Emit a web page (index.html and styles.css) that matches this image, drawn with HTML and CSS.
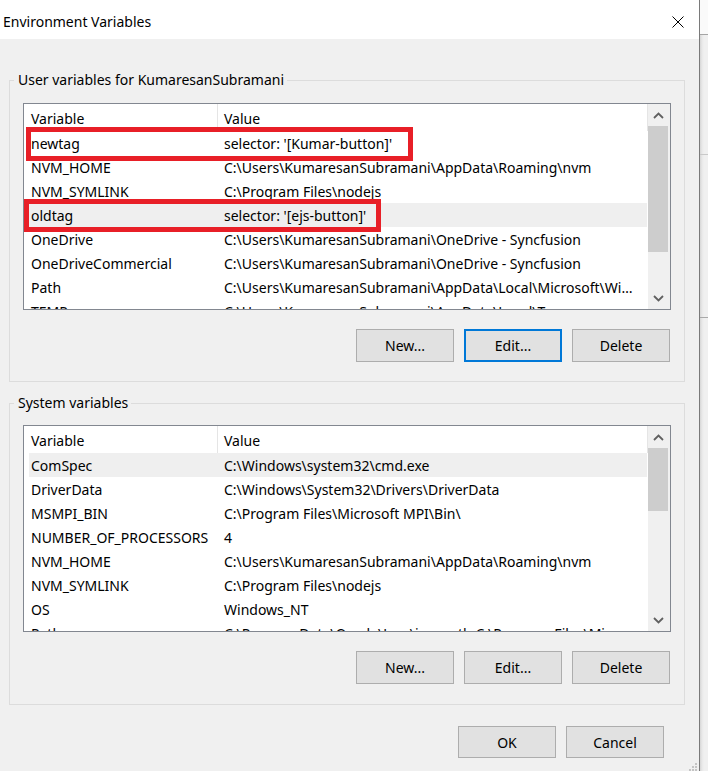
FILE: index.html
```html
<!DOCTYPE html>
<html lang="en">
<head>
<meta charset="utf-8">
<title>Environment Variables</title>
<link rel="stylesheet" href="styles.css">
</head>
<body>
<div class="screen">
  <div class="dialog">
    <div class="titlebar">
      <span class="title">Environment Variables</span>
      <svg class="close" width="12" height="12" viewBox="0 0 12 12"><path d="M0.5 0.5 L11.5 11.5 M11.5 0.5 L0.5 11.5" stroke="#000" stroke-width="1" fill="none"/></svg>
    </div>
    <div class="content">
      <fieldset class="group group-user">
        <legend>User variables for KumaresanSubramani</legend>
        <div class="list">
          <div class="list-main">
            <div class="list-head"><div class="cell c1">Variable</div><div class="cell c2">Value</div></div>
            <div class="row"><div class="cell c1">newtag</div><div class="cell c2">selector: '[Kumar-button]'</div></div>
            <div class="row"><div class="cell c1">NVM_HOME</div><div class="cell c2">C:\Users\KumaresanSubramani\AppData\Roaming\nvm</div></div>
            <div class="row"><div class="cell c1">NVM_SYMLINK</div><div class="cell c2">C:\Program Files\nodejs</div></div>
            <div class="row selected"><div class="cell c1">oldtag</div><div class="cell c2">selector: '[ejs-button]'</div></div>
            <div class="row"><div class="cell c1">OneDrive</div><div class="cell c2">C:\Users\KumaresanSubramani\OneDrive - Syncfusion</div></div>
            <div class="row"><div class="cell c1">OneDriveCommercial</div><div class="cell c2">C:\Users\KumaresanSubramani\OneDrive - Syncfusion</div></div>
            <div class="row"><div class="cell c1">Path</div><div class="cell c2">C:\Users\KumaresanSubramani\AppData\Local\Microsoft\WindowsApps;C:\Users\KumaresanSubramani\AppData\Roaming\nvm</div></div>
            <div class="row"><div class="cell c1">TEMP</div><div class="cell c2">C:\Users\KumaresanSubramani\AppData\Local\Temp</div></div>
          </div>
          <div class="scrollbar">
            <div class="sb-btn"><svg width="11" height="7" viewBox="0 0 11 7"><path d="M1 6 L5.5 1.5 L10 6" stroke="#606060" stroke-width="1.8" fill="none"/></svg></div>
            <div class="sb-track"><div class="sb-thumb thumb-user"></div></div>
            <div class="sb-btn"><svg width="11" height="7" viewBox="0 0 11 7"><path d="M1 1 L5.5 5.5 L10 1" stroke="#606060" stroke-width="1.8" fill="none"/></svg></div>
          </div>
          <div class="mark mark-new"></div>
          <div class="mark mark-old"></div>
        </div>
        <div class="btn-row">
          <button class="btn">New...</button>
          <button class="btn btn-focus">Edit...</button>
          <button class="btn">Delete</button>
        </div>
      </fieldset>

      <fieldset class="group group-sys">
        <legend>System variables</legend>
        <div class="list">
          <div class="list-main">
            <div class="list-head"><div class="cell c1">Variable</div><div class="cell c2">Value</div></div>
            <div class="row selected"><div class="cell c1">ComSpec</div><div class="cell c2">C:\Windows\system32\cmd.exe</div></div>
            <div class="row"><div class="cell c1">DriverData</div><div class="cell c2">C:\Windows\System32\Drivers\DriverData</div></div>
            <div class="row"><div class="cell c1">MSMPI_BIN</div><div class="cell c2">C:\Program Files\Microsoft MPI\Bin\</div></div>
            <div class="row"><div class="cell c1">NUMBER_OF_PROCESSORS</div><div class="cell c2">4</div></div>
            <div class="row"><div class="cell c1">NVM_HOME</div><div class="cell c2">C:\Users\KumaresanSubramani\AppData\Roaming\nvm</div></div>
            <div class="row"><div class="cell c1">NVM_SYMLINK</div><div class="cell c2">C:\Program Files\nodejs</div></div>
            <div class="row"><div class="cell c1">OS</div><div class="cell c2">Windows_NT</div></div>
            <div class="row"><div class="cell c1">Path</div><div class="cell c2">C:\ProgramData\Oracle\Java\javapath;C:\Program Files\Microsoft MPI\Bin\;C:\Windows\system32</div></div>
          </div>
          <div class="scrollbar">
            <div class="sb-btn"><svg width="11" height="7" viewBox="0 0 11 7"><path d="M1 6 L5.5 1.5 L10 6" stroke="#606060" stroke-width="1.8" fill="none"/></svg></div>
            <div class="sb-track"><div class="sb-thumb thumb-sys"></div></div>
            <div class="sb-btn"><svg width="11" height="7" viewBox="0 0 11 7"><path d="M1 1 L5.5 5.5 L10 1" stroke="#606060" stroke-width="1.8" fill="none"/></svg></div>
          </div>
        </div>
        <div class="btn-row">
          <button class="btn">New...</button>
          <button class="btn">Edit...</button>
          <button class="btn">Delete</button>
        </div>
      </fieldset>

      <div class="footer">
        <button class="btn btn-footer">OK</button>
        <button class="btn btn-footer">Cancel</button>
      </div>
    </div>
    <svg class="grip" width="10" height="9" viewBox="0 0 10 9">
      <rect x="7" y="1" width="2" height="2" fill="#c4c4c4"/>
      <rect x="4" y="4" width="2" height="2" fill="#c4c4c4"/>
      <rect x="7" y="4" width="2" height="2" fill="#c4c4c4"/>
      <rect x="1" y="7" width="2" height="2" fill="#c4c4c4"/>
      <rect x="4" y="7" width="2" height="2" fill="#c4c4c4"/>
      <rect x="7" y="7" width="2" height="2" fill="#c4c4c4"/>
    </svg>
  </div>
  <div class="backdrop">
    <div class="bd-top"></div>
    <div class="bd-mid"></div>
    <div class="bd-low"></div>
  </div>
</div>
</body>
</html>
```

FILE: styles.css
```css
* { box-sizing: border-box; }
html, body { margin: 0; padding: 0; }
body {
  width: 708px;
  height: 771px;
  overflow: hidden;
  font-family: "Noto Sans", "Open Sans", sans-serif;
  font-size: 14px;
  color: #000;
  background: #f0f0f0;
}
.screen { display: flex; height: 771px; }

.dialog {
  position: relative;
  width: 700px;
  flex: none;
  height: 771px;
  background: #f0f0f0;
  border-right: 1px solid #7a7a7a;
}

.titlebar {
  height: 39px;
  background: #fff;
  display: flex;
  align-items: center;
  justify-content: space-between;
  padding: 5px 15px 0 3px;
}
.title { line-height: 20px; }
.close { display: block; }

.content { padding: 0 14px 0 9px; }

.group {
  margin: 0;
  border: 1px solid #dcdcdc;
  min-width: 0;
  padding: 13px 13px 19px;
}
.group-user { margin-top: 31px; }
.group-sys { margin-top: 11px; padding-top: 12px; padding-bottom: 20px; }
.group legend {
  line-height: 20px;
  padding: 0 3px 0 4px;
  margin-left: -9px;
}

.list {
  position: relative;
  height: 207px;
  border: 1px solid #828790;
  background: #fff;
  display: flex;
}
.list-main { flex: 1; min-width: 0; overflow: hidden; }
.list-head { display: flex; height: 27px; line-height: 29px; }
.cell { white-space: nowrap; overflow: hidden; }
.list-head .c1 { width: 194px; flex: none; padding-left: 7px; border-right: 1px solid #e5e5e5; }
.list-head .c2 { flex: 1; padding-left: 6px; border-right: 1px solid #e5e5e5; }
.row { display: flex; height: 24px; line-height: 26px; }
.row .c1 { width: 194px; flex: none; padding-left: 7px; }
.row .c2 { flex: 1; min-width: 0; padding-left: 6px; padding-right: 8px; text-overflow: ellipsis; }
.row.selected {
  background: linear-gradient(90deg, transparent 5px, #efefef 5px, #efefef calc(100% - 1px), transparent calc(100% - 1px));
}

.scrollbar {
  width: 22px;
  flex: none;
  background: #f0f0f0;
  display: flex;
  flex-direction: column;
  padding-right: 2px;
}
.sb-btn { height: 22px; flex: none; display: flex; align-items: center; justify-content: center; }
.sb-btn svg { display: block; }
.sb-track { flex: 1; }
.sb-thumb { background: #cdcdcd; }
.thumb-user { height: 126px; }
.thumb-sys { height: 63px; }

.mark {
  position: absolute;
  border: 5px solid #e81f27;
  pointer-events: none;
}
.mark-new { left: 2px; top: 23px; width: 387px; height: 34px; }
.mark-old { left: 0; top: 95px; width: 357px; height: 33px; }

.btn-row {
  display: flex;
  justify-content: flex-end;
  gap: 10px;
  margin-top: 19px;
  padding-right: 1px;
}
.btn {
  width: 98px;
  height: 33px;
  padding: 0;
  margin: 0;
  background: #e1e1e1;
  border: 1px solid #adadad;
  border-radius: 0;
  font-family: inherit;
  font-size: 14px;
  color: #000;
}
.btn-focus { border: 2px solid #0078d7; }
.footer {
  display: flex;
  justify-content: flex-end;
  gap: 10px;
  margin-top: 21px;
  padding-right: 21px;
}
.btn-footer { height: 32px; }

.grip { position: absolute; right: 1px; bottom: 0; display: block; }

.backdrop {
  flex: 1;
  background: linear-gradient(90deg, #d6d6d6 0, #e8e8e8 2px, #f0f0f0 4px);
}
.bd-top { height: 35px; background: #fafafa; border-bottom: 1px solid #a5a5a5; }
.bd-mid { height: 120px; border-bottom: 1px solid #c9c9c9; }
.bd-low { height: 163px; border-bottom: 1px solid #a9a9a9; }
```
